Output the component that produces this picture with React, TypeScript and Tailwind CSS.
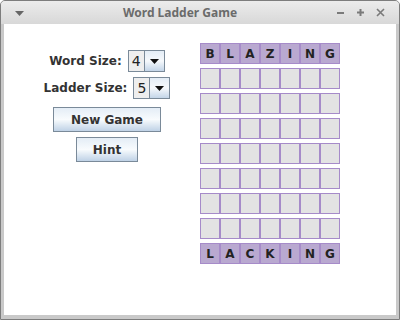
import React from 'react';

const FONT = { fontFamily: '"DejaVu Sans", "Liberation Sans", sans-serif' };
const TITLE_FONT = { fontFamily: '"Noto Sans", "Liberation Sans", sans-serif' };

const START = 'BLAZING';
const END = 'LACKING';
const EMPTY_ROWS = 7;

function Combo({ value }: { value: string }) {
  return (
    <div className="flex h-[22px] border border-[#7a8a99] bg-white">
      <div className="flex w-[15px] items-center justify-center bg-[#eeeeee] text-[14px] font-normal text-[#222]">
        {value}
      </div>
      <div className="flex w-[20px] items-center justify-center border-l border-[#7a8a99] bg-gradient-to-b from-[#e4edf6] via-[#f6f9fc] to-[#c3d5e8]">
        <svg width="9" height="5" viewBox="0 0 9 5">
          <path d="M0 0h9L4.5 5z" fill="#111" />
        </svg>
      </div>
    </div>
  );
}

function Button({ label, width }: { label: string; width: string }) {
  return (
    <div
      className={`flex h-[25px] ${width} items-center justify-center border border-[#7a8a99] bg-gradient-to-b from-[#e4edf6] via-[#f8fbfd] to-[#bfd2e6] text-[12px] font-bold text-[#333]`}
    >
      {label}
    </div>
  );
}

function Row({ word }: { word?: string }) {
  const letters = word ? word.split('') : Array(7).fill('');
  return (
    <div className="flex">
      {letters.map((ch, i) => (
        <div
          key={i}
          className={`flex h-[21px] w-[20px] items-center justify-center border border-[#a68bc9] text-[12px] font-bold text-[#222] ${
            word ? 'bg-[#b9a9d0]' : 'bg-[#e3e3e3]'
          }`}
        >
          {ch}
        </div>
      ))}
    </div>
  );
}

export default function App() {
  return (
    <div className="h-[320px] w-[400px] bg-white" style={FONT}>
      <div className="flex h-full flex-col overflow-hidden rounded-t-[5px] border border-[#7d7d7d] bg-[#c9c9c9]">
        {/* Title bar */}
        <div className="flex h-[23px] items-center bg-gradient-to-b from-[#ececec] to-[#d8d8d8] px-[14px]">
          <svg width="9" height="5" viewBox="0 0 9 5" className="mt-[1px]">
            <path d="M0 0h9L4.5 5z" fill="#666" />
          </svg>
          <div className="flex-1 text-center text-[12px] font-bold text-[#6b6b6b]" style={TITLE_FONT}>
            Word Ladder Game
          </div>
          <div className="flex items-center gap-[11px] text-[#7a7a7a]">
            <svg width="9" height="9" viewBox="0 0 9 9">
              <path d="M1 5h7" stroke="currentColor" strokeWidth="2" />
            </svg>
            <svg width="9" height="9" viewBox="0 0 9 9">
              <path d="M1 4.5h7M4.5 1v7" stroke="currentColor" strokeWidth="2" />
            </svg>
            <svg width="9" height="9" viewBox="0 0 9 9">
              <path d="M1 1l7 7M8 1l-7 7" stroke="currentColor" strokeWidth="1.6" />
            </svg>
          </div>
        </div>

        {/* Content */}
        <div className="mx-[3px] mb-[4px] flex flex-1 gap-[23px] bg-white pl-[33px] pt-[19px]">
          <div className="mt-[7px] flex w-[140px] flex-col items-center text-[12px] font-bold text-[#333]">
            <div className="flex items-center gap-[6px]">
              <span>Word Size:</span>
              <Combo value="4" />
            </div>
            <div className="mt-[5px] flex items-center gap-[6px]">
              <span>Ladder Size:</span>
              <Combo value="5" />
            </div>
            <div className="mt-[8px]">
              <Button label="New Game" width="w-[108px]" />
            </div>
            <div className="mt-[5px]">
              <Button label="Hint" width="w-[62px]" />
            </div>
          </div>

          <div className="flex flex-col gap-[4px]">
            <Row word={START} />
            {Array.from({ length: EMPTY_ROWS }).map((_, i) => (
              <Row key={i} />
            ))}
            <Row word={END} />
          </div>
        </div>
      </div>
    </div>
  );
}
